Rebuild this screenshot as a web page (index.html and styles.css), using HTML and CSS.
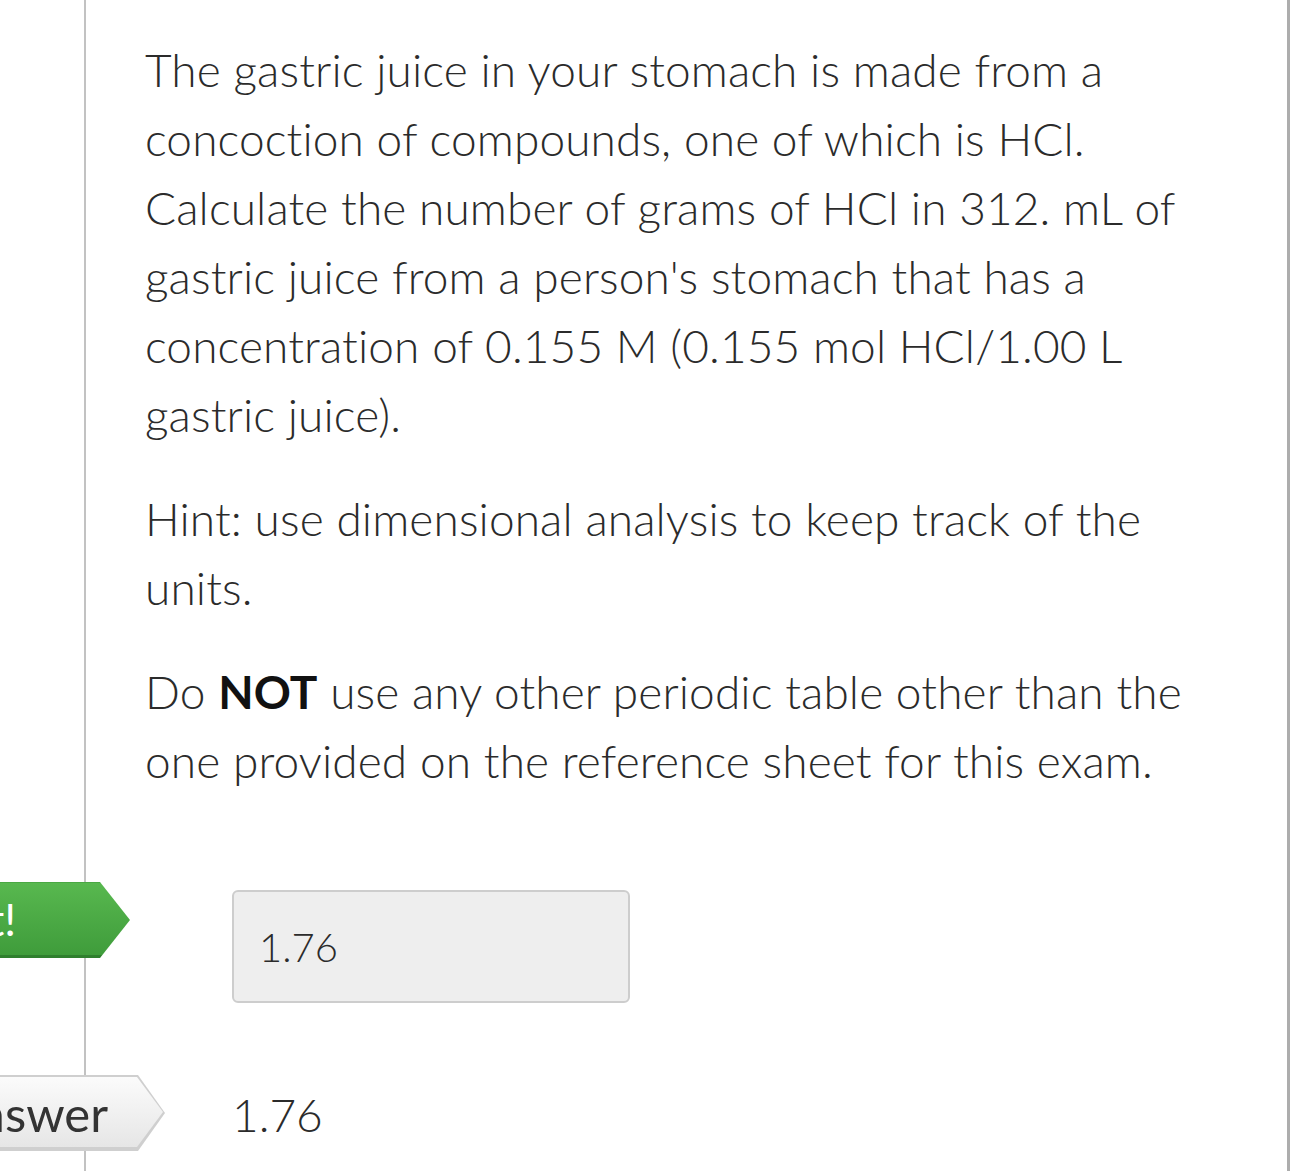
FILE: index.html
```html
<!DOCTYPE html>
<html>
<head>
<meta charset="utf-8">
<link rel="stylesheet" href="styles.css">
</head>
<body>
<div class="page">
  <div class="question-text">
    <p>The gastric juice in your stomach is made from a concoction of compounds, one of which is HCl. Calculate the number of grams of HCl in 312. mL of gastric juice from a person's stomach that has a concentration of 0.155 M (0.155 mol HCl/1.00 L gastric juice).</p>
    <p>Hint: use dimensional analysis to keep track of the units.</p>
    <p>Do <strong>NOT</strong> use any other periodic table other than the one provided on the reference sheet for this exam.</p>
  </div>
  <div class="answers">
    <div class="answer-row row-user">
      <div class="tag tag-correct"><span class="tag-label">Correct!</span></div>
      <div class="answer-box">1.76</div>
    </div>
    <div class="answer-row row-correct">
      <div class="tag tag-answer"><span class="tag-fill"></span><span class="tag-label">Correct Answer</span></div>
      <div class="answer-value">1.76</div>
    </div>
  </div>
</div>
</body>
</html>
```

FILE: styles.css
```css
html, body {
  margin: 0;
  padding: 0;
  background: #ffffff;
  overflow: hidden;
}

body {
  font-family: "Lato", "Open Sans", sans-serif;
  font-weight: 300;
  color: #2b2b2b;
}

.page {
  position: relative;
  margin-left: 84px;
  width: 1206px;
  min-height: 1171px;
  border-left: 2px solid #c2c2c2;
  border-right: 3px solid #adadad;
  box-sizing: border-box;
}

.question-text {
  padding: 35px 67px 0 59px;
  font-size: 46px;
  line-height: 69px;
  letter-spacing: 0.12px;
}

.question-text p {
  margin: 0 0 35px 0;
}

.question-text strong {
  font-weight: 700;
  color: #111;
}

.answers {
  padding-left: 146px;
}

.answer-row {
  position: relative;
}

.row-user {
  margin-top: 95px;
  height: 113px;
}

.answer-box {
  box-sizing: border-box;
  width: 398px;
  height: 113px;
  background: #eeeeee;
  border: 2px solid #cdcdcd;
  border-radius: 6px;
  padding-left: 25px;
  padding-top: 1px;
  font-size: 40px;
  line-height: 109px;
  color: #2b2b2b;
}

.row-correct {
  margin-top: 72px;
  height: 76px;
}

.answer-value {
  font-size: 46px;
  line-height: 76px;
  padding-top: 2px;
  color: #2b2b2b;
}

.tag {
  position: absolute;
  height: 76px;
  box-sizing: border-box;
  display: flex;
  align-items: center;
  justify-content: flex-end;
  font-family: "Lato", "Open Sans", sans-serif;
  font-weight: 400;
}

.tag-correct {
  top: -8px;
  width: 400px;
  left: -502px;
  clip-path: polygon(0 0, calc(100% - 30px) 0, 100% 50%, calc(100% - 30px) 100%, 0 100%);
  background: linear-gradient(#58b84f, #3f9c3b);
  border-bottom: 3px solid #2f7f2e;
  border-top: 1px solid #4aa843;
  color: #ffffff;
  padding-right: 114px;
  font-size: 44px;
  font-weight: 400;
}

.tag-answer {
  top: 0;
  width: 400px;
  left: -467px;
  clip-path: polygon(0 0, calc(100% - 27px) 0, 100% 50%, calc(100% - 27px) 100%, 0 100%);
  background: #cfcfcf;
  color: #333333;
  padding-right: 57px;
  font-size: 49px;
  letter-spacing: 0;
}

.tag-fill {
  position: absolute;
  left: 0;
  top: 2px;
  right: 2px;
  bottom: 4px;
  clip-path: polygon(0 0, calc(100% - 26px) 0, 100% 50%, calc(100% - 26px) 100%, 0 100%);
  background: linear-gradient(#fbfbfb, #e6e6e6);
}

.tag-label {
  position: relative;
  white-space: nowrap;
}
```
